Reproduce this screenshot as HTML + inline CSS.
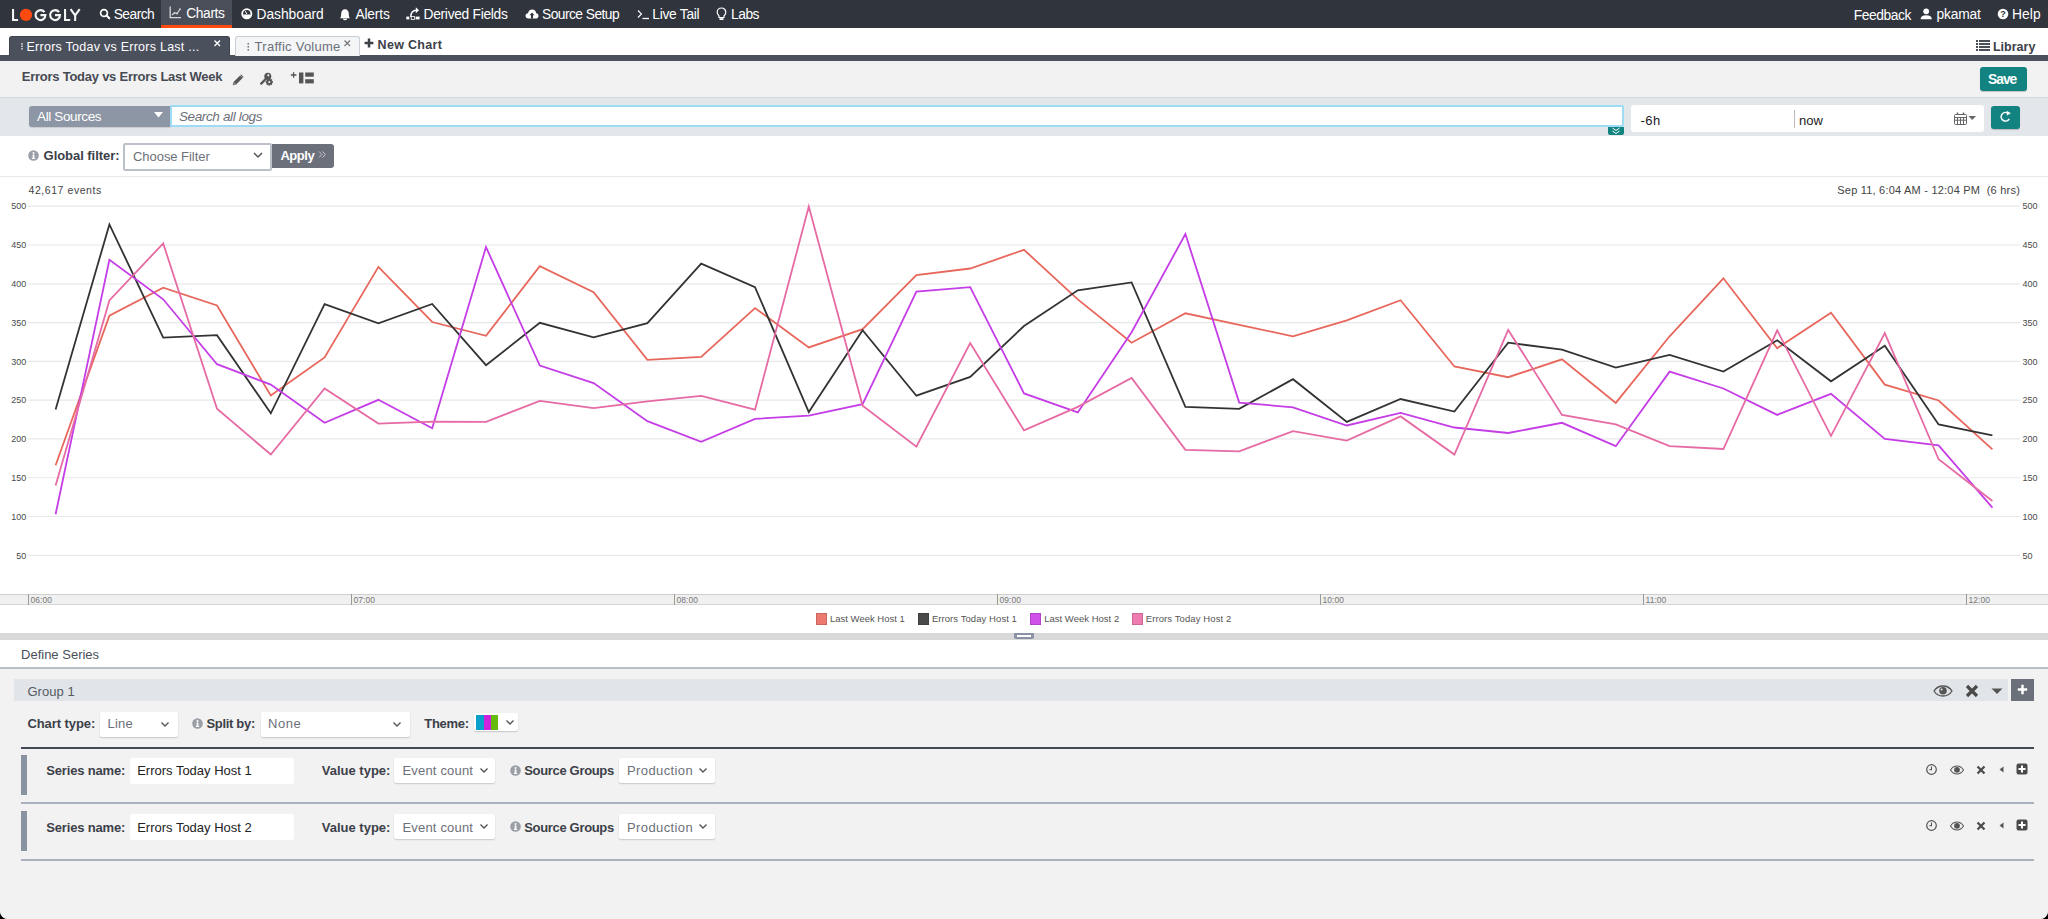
<!DOCTYPE html>
<html><head><meta charset="utf-8"><title>Loggly Charts</title>
<style>
html,body{margin:0;padding:0;}
body{width:2048px;height:919px;overflow:hidden;position:relative;background:#000;font-family:'Liberation Sans', sans-serif;}
#wrap{position:absolute;left:0;top:0;width:2048px;height:919px;overflow:hidden;background:#f2f2f2;border-radius:0 0 8px 8px;}
</style></head><body><div id="wrap">
<div style="position:absolute;left:0px;top:0px;width:2048.00px;height:28.00px;background:#30343d"></div><div style="position:absolute;left:161px;top:0px;width:71.00px;height:28.00px;background:#4a4e59"></div><div style="position:absolute;left:161px;top:25px;width:71.00px;height:3.00px;background:#ff4a0f"></div><svg style="position:absolute;left:0px;top:0px;" width="90" height="28" viewBox="0 0 90 28"><g fill="none" stroke="#f4f4f4" stroke-width="2.1"><path d="M13.05 8.9V20H18.1"/><path d="M44.5 12.2A4.95 4.95 0 1 0 45.45 15.1H40.4"/><path d="M59.1 12.2A4.95 4.95 0 1 0 60.05 15.1H55"/><path d="M65.05 8.9V20H70.2"/><path d="M70.6 9.1L75.15 15.4L79.7 9.1M75.15 15.2V21"/></g><circle cx="26" cy="14.9" r="6.1" fill="#ff4a0f"/></svg><span style="position:absolute;left:113.70px;top:8px;font-size:13.8px;line-height:1;font-weight:normal;color:#ffffff;white-space:pre;letter-spacing:-0.528px;">Search</span><span style="position:absolute;left:186.30px;top:7px;font-size:13.8px;line-height:1;font-weight:normal;color:#ffffff;white-space:pre;letter-spacing:-0.408px;">Charts</span><span style="position:absolute;left:256.50px;top:8px;font-size:13.8px;line-height:1;font-weight:normal;color:#ffffff;white-space:pre;letter-spacing:-0.028px;">Dashboard</span><span style="position:absolute;left:355.40px;top:8px;font-size:13.8px;line-height:1;font-weight:normal;color:#ffffff;white-space:pre;letter-spacing:-0.154px;">Alerts</span><span style="position:absolute;left:423.50px;top:8px;font-size:13.8px;line-height:1;font-weight:normal;color:#ffffff;white-space:pre;letter-spacing:-0.291px;">Derived Fields</span><span style="position:absolute;left:542.00px;top:8px;font-size:13.8px;line-height:1;font-weight:normal;color:#ffffff;white-space:pre;letter-spacing:-0.539px;">Source Setup</span><span style="position:absolute;left:652.30px;top:8px;font-size:13.8px;line-height:1;font-weight:normal;color:#ffffff;white-space:pre;letter-spacing:-0.285px;">Live Tail</span><span style="position:absolute;left:731.00px;top:8px;font-size:13.8px;line-height:1;font-weight:normal;color:#ffffff;white-space:pre;letter-spacing:-0.473px;">Labs</span><span style="position:absolute;left:1853.70px;top:9px;font-size:13.8px;line-height:1;font-weight:normal;color:#ffffff;white-space:pre;letter-spacing:-0.399px;">Feedback</span><span style="position:absolute;left:1936.50px;top:8px;font-size:13.8px;line-height:1;font-weight:normal;color:#ffffff;white-space:pre;letter-spacing:-0.182px;">pkamat</span><span style="position:absolute;left:2012.00px;top:8px;font-size:13.8px;line-height:1;font-weight:normal;color:#ffffff;white-space:pre;letter-spacing:0.099px;">Help</span><svg style="position:absolute;left:99px;top:8px;" width="12" height="12" viewBox="0 0 12 12"><circle cx="5" cy="5" r="3.4" fill="none" stroke="#fff" stroke-width="1.7"/><line x1="7.6" y1="7.6" x2="10.3" y2="10.3" stroke="#fff" stroke-width="2.1" stroke-linecap="round"/></svg><svg style="position:absolute;left:169px;top:6px;" width="13" height="13" viewBox="0 0 13 13"><path d="M1.2 0.5V11.6H12" fill="none" stroke="#d8d8d8" stroke-width="1.3"/><path d="M3 9L5.5 6.8L8 7.5L11 3.2" fill="none" stroke="#d8d8d8" stroke-width="1.1"/><circle cx="5.5" cy="6.8" r="0.9" fill="#d8d8d8"/><circle cx="8" cy="7.5" r="0.9" fill="#d8d8d8"/><circle cx="11" cy="3.2" r="0.9" fill="#d8d8d8"/></svg><svg style="position:absolute;left:241px;top:8px;" width="12" height="12" viewBox="0 0 12 12"><circle cx="5.8" cy="5.8" r="5.5" fill="#fff"/><circle cx="5.8" cy="5.8" r="3.7" fill="#30343d"/><path d="M2.1 6.6A3.7 3.7 0 0 0 9.5 6.6Z" fill="#fff"/><line x1="5.8" y1="6" x2="4.3" y2="3.2" stroke="#fff" stroke-width="1"/></svg><svg style="position:absolute;left:339px;top:8px;" width="12" height="13" viewBox="0 0 12 13"><path d="M1 10.2C2.2 9.2 2.2 7.2 2.2 5.6C2.2 3.1 3.8 1.2 6 1.2C8.2 1.2 9.8 3.1 9.8 5.6C9.8 7.2 9.8 9.2 11 10.2Z" fill="#fff"/><path d="M4.5 10.6A1.6 1.6 0 0 0 7.5 10.6" fill="none" stroke="#fff" stroke-width="1.4"/></svg><svg style="position:absolute;left:406px;top:6px;" width="14" height="14" viewBox="0 0 14 14"><rect x="0.3" y="10.6" width="3" height="2.8" fill="#fff"/><rect x="9.6" y="10.6" width="4" height="2.8" fill="#fff"/><path d="M4.8 11C4.8 6.5 6.8 4.2 10.5 4.2" fill="none" stroke="#fff" stroke-width="1.4"/><path d="M9.8 1.2L13 4.2L9.8 7.2Z" fill="#fff"/><rect x="5.2" y="10.4" width="3.2" height="3" fill="none" stroke="#fff" stroke-width="0.8"/></svg><svg style="position:absolute;left:525px;top:8px;" width="14" height="12" viewBox="0 0 14 12"><path d="M3.5 10.5C1.5 10.5 0.5 9.2 0.5 7.8C0.5 6.3 1.6 5.3 3 5.3C3.3 3 5 1.5 7.2 1.5C9.5 1.5 11 3.2 11.2 5.3C12.6 5.4 13.5 6.5 13.5 7.9C13.5 9.3 12.5 10.5 11 10.5Z" fill="#fff"/><path d="M7 4.5L4.5 7.2H6V10.5H8V7.2H9.5Z" fill="#30343d"/></svg><svg style="position:absolute;left:637px;top:9px;" width="13" height="11" viewBox="0 0 13 11"><path d="M1 1.5L4.5 5L1 8.5" fill="none" stroke="#fff" stroke-width="1.1"/><line x1="5.5" y1="9.5" x2="12" y2="9.5" stroke="#fff" stroke-width="1.3"/></svg><svg style="position:absolute;left:716px;top:7px;" width="11" height="14" viewBox="0 0 11 14"><path d="M5.5 1C3 1 1.2 2.9 1.2 5.2C1.2 7 2.3 8 3 9V10.5H8V9C8.7 8 9.8 7 9.8 5.2C9.8 2.9 8 1 5.5 1Z" fill="none" stroke="#fff" stroke-width="1.2"/><rect x="3.5" y="11.2" width="4" height="1.8" fill="#fff"/></svg><svg style="position:absolute;left:1920px;top:8px;" width="13" height="12" viewBox="0 0 13 12"><circle cx="6.2" cy="3.3" r="2.9" fill="#fff"/><path d="M0.6 11.3C0.6 8.6 2.4 7.2 6.2 7.2C10 7.2 11.8 8.6 11.8 11.3Z" fill="#fff"/></svg><svg style="position:absolute;left:1997px;top:8px;" width="12" height="12" viewBox="0 0 12 12"><circle cx="6" cy="6" r="5.3" fill="#fff"/><text x="6" y="9.3" font-size="9" font-weight="bold" text-anchor="middle" fill="#30343d" font-family="Liberation Sans">?</text></svg><div style="position:absolute;left:0px;top:28px;width:2048.00px;height:27.00px;background:#ffffff"></div><div style="position:absolute;left:0px;top:55px;width:2048.00px;height:6.00px;background:#4b505d"></div><div style="position:absolute;left:9px;top:36px;width:221.00px;height:20.00px;background:#4b505d;border:1px solid #3f434e;border-bottom:none;box-sizing:border-box;border-radius:3px 3px 0 0"></div><svg style="position:absolute;left:21px;top:43px;" width="3" height="8" viewBox="0 0 3 8"><rect x="0" y="0" width="2" height="1.6" fill="#bbb"/><rect x="0" y="2.5" width="2" height="1.6" fill="#bbb"/><rect x="0" y="5" width="2" height="1.6" fill="#bbb"/></svg><span style="position:absolute;left:26.50px;top:41px;font-size:12.5px;line-height:1;font-weight:normal;color:#ffffff;white-space:pre;letter-spacing:0.255px;">Errors Todav vs Errors Last ...</span><svg style="position:absolute;left:213px;top:39px;" width="9" height="9" viewBox="0 0 9 9"><path d="M1.5 1.5L7 7M7 1.5L1.5 7" stroke="#fff" stroke-width="1.4"/></svg><div style="position:absolute;left:235px;top:36px;width:125.00px;height:20.00px;background:#f4f5f7;border:1px solid #c9ced6;border-bottom:none;border-radius:3px 3px 0 0;box-sizing:border-box"></div><svg style="position:absolute;left:247px;top:43px;" width="3" height="10" viewBox="0 0 3 10"><rect x="0.5" y="0" width="1.5" height="1.6" fill="#777"/><rect x="0.5" y="3" width="1.5" height="1.6" fill="#777"/><rect x="0.5" y="6" width="1.5" height="1.6" fill="#777"/></svg><span style="position:absolute;left:254.60px;top:40px;font-size:13px;line-height:1;font-weight:normal;color:#6d7079;white-space:pre;letter-spacing:0.259px;">Traffic Volume</span><svg style="position:absolute;left:343px;top:39px;" width="9" height="9" viewBox="0 0 9 9"><path d="M1.5 1.5L7 7M7 1.5L1.5 7" stroke="#777" stroke-width="1.2"/></svg><svg style="position:absolute;left:363.5px;top:37.5px;" width="10" height="10" viewBox="0 0 10 10"><path d="M5 0.6V9.4M0.6 5H9.4" stroke="#3c4049" stroke-width="2.5"/></svg><span style="position:absolute;left:377.60px;top:39px;font-size:12.5px;line-height:1;font-weight:bold;color:#3c4049;white-space:pre;letter-spacing:0.306px;">New Chart</span><svg style="position:absolute;left:1976px;top:40px;" width="14" height="11" viewBox="0 0 14 11"><g fill="#4a4f58"><rect x="0" y="0" width="2" height="2"/><rect x="3" y="0" width="11" height="2"/><rect x="0" y="3" width="2" height="2"/><rect x="3" y="3" width="11" height="2"/><rect x="0" y="6" width="2" height="2"/><rect x="3" y="6" width="11" height="2"/><rect x="0" y="9" width="2" height="2"/><rect x="3" y="9" width="11" height="2"/></g></svg><span style="position:absolute;left:1992.90px;top:41px;font-size:12.5px;line-height:1;font-weight:bold;color:#3c4049;white-space:pre;letter-spacing:0.029px;">Library</span><div style="position:absolute;left:0px;top:61px;width:2048.00px;height:36.00px;background:#f2f2f2"></div><div style="position:absolute;left:0px;top:97px;width:2048.00px;height:1.00px;background:#d5d8dd"></div><span style="position:absolute;left:21.75px;top:70px;font-size:13px;line-height:1;font-weight:bold;color:#464a52;white-space:pre;letter-spacing:-0.245px;">Errors Today vs Errors Last Week</span><svg style="position:absolute;left:229px;top:72px;" width="16" height="16" viewBox="0 0 16 16"><g transform="translate(8.4,8.7) rotate(45)"><rect x="-1.8" y="-5.6" width="3.6" height="9.2" fill="#555"/><rect x="-1.8" y="-7" width="3.6" height="1" fill="#555"/><path d="M-1.8 3.8L0 6.6L1.8 3.8Z" fill="#555"/><path d="M-0.8 4.2L0 5.4L0.8 4.2Z" fill="#ddd"/></g></svg><svg style="position:absolute;left:258px;top:72px;" width="18" height="16" viewBox="0 0 18 16"><path d="M3.2 11.6L8.4 6.2" stroke="#555" stroke-width="2.3" stroke-linecap="round"/><circle cx="9.8" cy="4.2" r="3.5" fill="#555"/><circle cx="10.3" cy="3.3" r="1.1" fill="#f2f2f2"/><g transform="translate(11.3,10)" fill="#555"><circle r="2.7"/><rect x="-0.9" y="-3.6" width="1.8" height="1.6" transform="rotate(0)"/><rect x="-0.9" y="-3.6" width="1.8" height="1.6" transform="rotate(45)"/><rect x="-0.9" y="-3.6" width="1.8" height="1.6" transform="rotate(90)"/><rect x="-0.9" y="-3.6" width="1.8" height="1.6" transform="rotate(135)"/><rect x="-0.9" y="-3.6" width="1.8" height="1.6" transform="rotate(180)"/><rect x="-0.9" y="-3.6" width="1.8" height="1.6" transform="rotate(225)"/><rect x="-0.9" y="-3.6" width="1.8" height="1.6" transform="rotate(270)"/><rect x="-0.9" y="-3.6" width="1.8" height="1.6" transform="rotate(315)"/></g><circle cx="11.3" cy="10" r="1.1" fill="#f2f2f2"/></svg><svg style="position:absolute;left:290px;top:71px;" width="25" height="14" viewBox="0 0 25 14"><path d="M3.6 1.2V6.8M0.8 4H6.4" stroke="#555" stroke-width="1.3"/><rect x="9" y="1.5" width="4.4" height="10.9" fill="#555"/><rect x="15.2" y="1.5" width="8.6" height="4.2" fill="#555"/><rect x="15.2" y="8.2" width="8.6" height="4.2" fill="#555"/></svg><div style="position:absolute;left:1980px;top:67px;width:47.00px;height:24.00px;background:#128381;border-radius:3px;box-shadow:0 1px 1px rgba(0,0,0,.2)"></div><span style="position:absolute;left:1988.00px;top:73px;font-size:13.8px;line-height:1;font-weight:bold;color:#ffffff;white-space:pre;letter-spacing:-0.983px;">Save</span><div style="position:absolute;left:0px;top:98px;width:2048.00px;height:38.00px;background:#e3e6ea"></div><div style="position:absolute;left:29px;top:105.5px;width:142.00px;height:21.50px;background:#8d96a4;border-radius:3px 0 0 3px;box-shadow:0 1px 1px rgba(0,0,0,.12)"></div><span style="position:absolute;left:37.00px;top:110px;font-size:13.5px;line-height:1;font-weight:normal;color:#ffffff;white-space:pre;letter-spacing:-0.373px;">All Sources</span><svg style="position:absolute;left:154px;top:112px;" width="9" height="6" viewBox="0 0 9 6"><path d="M0 0H9L4.5 5.5Z" fill="#fff"/></svg><div style="position:absolute;left:170px;top:105px;width:1454.00px;height:21.50px;background:#fff;border:2px solid #9edcf6;border-radius:0 2px 2px 0;box-sizing:border-box"></div><span style="position:absolute;left:178.90px;top:110px;font-size:13.5px;line-height:1;font-weight:normal;color:#6d7079;white-space:pre;letter-spacing:-0.357px;font-style:italic">Search all logs</span><div style="position:absolute;left:1608px;top:127px;width:16.00px;height:8.00px;background:#128381;border-radius:0 0 2px 2px"></div><svg style="position:absolute;left:1610px;top:127px;" width="12" height="8" viewBox="0 0 12 8"><path d="M2.5 1L6 3.5L9.5 1M2.5 4L6 6.5L9.5 4" fill="none" stroke="#fff" stroke-width="1"/></svg><div style="position:absolute;left:1631px;top:105px;width:353.00px;height:27.00px;background:#fff;border-radius:3px"></div><span style="position:absolute;left:1640.60px;top:114px;font-size:13px;line-height:1;font-weight:normal;color:#222;white-space:pre;letter-spacing:0.420px;">-6h</span><div style="position:absolute;left:1794px;top:110px;width:1.00px;height:18.00px;background:#bbb"></div><span style="position:absolute;left:1799.00px;top:114px;font-size:13px;line-height:1;font-weight:normal;color:#222;white-space:pre;letter-spacing:-0.030px;">now</span><svg style="position:absolute;left:1954px;top:112px;" width="23" height="13" viewBox="0 0 23 13"><g fill="none" stroke="#666" stroke-width="1"><rect x="0.5" y="2.5" width="12" height="10" rx="1"/><path d="M0.5 5.5H12.5M0.5 8.2H12.5M3.5 5.5V12.5M6.5 5.5V12.5M9.5 5.5V12.5"/><path d="M3.5 0.5V3M9.5 0.5V3" stroke-width="1.4"/></g><path d="M14.5 4H22L18.2 8Z" fill="#666"/></svg><div style="position:absolute;left:1991px;top:106px;width:29.00px;height:23.00px;background:#128381;border-radius:3px;box-shadow:0 1px 1px rgba(0,0,0,.2)"></div><svg style="position:absolute;left:1998px;top:110px;" width="15" height="15" viewBox="0 0 15 15"><path d="M9.4 2.9A4.3 4.3 0 1 0 11.22 8.85" fill="none" stroke="#fff" stroke-width="1.6"/><path d="M8.8 0.7L12.9 3.3L8.9 5.6Z" fill="#fff"/></svg><div style="position:absolute;left:0px;top:136px;width:2048.00px;height:41.00px;background:#ffffff"></div><div style="position:absolute;left:0px;top:176px;width:2048.00px;height:1.00px;background:#e8e9eb"></div><svg style="position:absolute;left:28px;top:150px;" width="11" height="11" viewBox="0 0 11 11"><circle cx="5.5" cy="5.5" r="5.3" fill="#9a9ea6"/><rect x="4.6" y="4.5" width="1.8" height="4.5" fill="#fff"/><rect x="3.8" y="8" width="3.4" height="1" fill="#fff"/><circle cx="5.5" cy="2.9" r="1" fill="#fff"/></svg><span style="position:absolute;left:43.60px;top:149px;font-size:13px;line-height:1;font-weight:bold;color:#3c4049;white-space:pre;letter-spacing:-0.048px;">Global filter:</span><div style="position:absolute;left:123px;top:142.5px;width:149.00px;height:28.50px;background:#fff;border:2px solid #bcc1c9;border-radius:2px;box-sizing:border-box"></div><span style="position:absolute;left:133.00px;top:150px;font-size:13px;line-height:1;font-weight:normal;color:#6d7079;white-space:pre;letter-spacing:-0.048px;">Choose Filter</span><svg style="position:absolute;left:253px;top:152px;" width="10" height="7" viewBox="0 0 10 7"><path d="M1 1L5 5L9 1" fill="none" stroke="#555" stroke-width="1.5"/></svg><div style="position:absolute;left:272px;top:144px;width:62.00px;height:24.00px;background:#6c707b;border-radius:0 3px 3px 0"></div><span style="position:absolute;left:280.40px;top:149px;font-size:13px;line-height:1;font-weight:bold;color:#ffffff;white-space:pre;letter-spacing:-0.445px;">Apply</span><svg style="position:absolute;left:318px;top:150px;" width="9" height="9" viewBox="0 0 9 9"><path d="M1 1.5L4 4.5L1 7.5M4.5 1.5L7.5 4.5L4.5 7.5" fill="none" stroke="#ccc" stroke-width="1"/></svg><div style="position:absolute;left:0px;top:177px;width:2048.00px;height:456.00px;background:#ffffff"></div><span style="position:absolute;left:28.50px;top:185px;font-size:10.5px;line-height:1;font-weight:normal;color:#444;white-space:pre;letter-spacing:0.565px;">42,617 events</span><span style="position:absolute;left:1837.25px;top:185px;font-size:11px;line-height:1;font-weight:normal;color:#444;white-space:pre;letter-spacing:0.214px;">Sep 11, 6:04 AM - 12:04 PM  (6 hrs)</span><svg style="position:absolute;left:0px;top:176px;" width="2048" height="457" viewBox="0 0 2048 457"><line x1="28" y1="379.31" x2="2020" y2="379.31" stroke="#e8e8e8" stroke-width="1.2"/><line x1="28" y1="340.52" x2="2020" y2="340.52" stroke="#e8e8e8" stroke-width="1.2"/><line x1="28" y1="301.73" x2="2020" y2="301.73" stroke="#e8e8e8" stroke-width="1.2"/><line x1="28" y1="262.94" x2="2020" y2="262.94" stroke="#e8e8e8" stroke-width="1.2"/><line x1="28" y1="224.15" x2="2020" y2="224.15" stroke="#e8e8e8" stroke-width="1.2"/><line x1="28" y1="185.36" x2="2020" y2="185.36" stroke="#e8e8e8" stroke-width="1.2"/><line x1="28" y1="146.57" x2="2020" y2="146.57" stroke="#e8e8e8" stroke-width="1.2"/><line x1="28" y1="107.78" x2="2020" y2="107.78" stroke="#e8e8e8" stroke-width="1.2"/><line x1="28" y1="68.99" x2="2020" y2="68.99" stroke="#e8e8e8" stroke-width="1.2"/><line x1="28" y1="30.20" x2="2020" y2="30.20" stroke="#e8e8e8" stroke-width="1.2"/><rect x="0" y="418" width="2048" height="11" fill="#f0f0f0"/><line x1="0" y1="418.5" x2="2048" y2="418.5" stroke="#cfcfcf"/><line x1="0" y1="428.5" x2="2048" y2="428.5" stroke="#d6d6d6"/><line x1="28.5" y1="418" x2="28.5" y2="429" stroke="#999"/><line x1="351.5" y1="418" x2="351.5" y2="429" stroke="#999"/><line x1="674.5" y1="418" x2="674.5" y2="429" stroke="#999"/><line x1="997.5" y1="418" x2="997.5" y2="429" stroke="#999"/><line x1="1320.5" y1="418" x2="1320.5" y2="429" stroke="#999"/><line x1="1643.5" y1="418" x2="1643.5" y2="429" stroke="#999"/><line x1="1966.5" y1="418" x2="1966.5" y2="429" stroke="#999"/><polyline points="55.6,289.3 109.4,139.6 163.2,111.7 217.0,129.5 270.8,219.5 324.6,181.5 378.4,90.9 432.2,146.0 486.0,159.8 539.8,90.1 593.6,116.1 647.4,183.8 701.2,180.9 755.0,132.1 808.8,171.4 862.6,153.2 916.4,99.0 970.2,92.5 1024.0,73.8 1077.8,123.4 1131.6,166.7 1185.4,137.3 1239.2,148.9 1293.0,160.3 1346.8,144.4 1400.6,124.2 1454.4,190.5 1508.2,201.2 1562.0,183.3 1615.8,226.9 1669.6,160.3 1723.4,102.3 1777.2,172.2 1831.0,136.7 1884.8,208.6 1938.6,224.5 1992.4,273.3" fill="none" stroke="#e8675c" stroke-width="1.8" stroke-linejoin="miter"/><polyline points="55.6,233.5 109.4,48.4 163.2,161.6 217.0,159.2 270.8,237.3 324.6,128.2 378.4,147.3 432.2,128.0 486.0,189.2 539.8,146.8 593.6,161.3 647.4,147.2 701.2,87.7 755.0,111.1 808.8,236.1 862.6,154.3 916.4,219.7 970.2,200.9 1024.0,150.0 1077.8,114.3 1131.6,106.4 1185.4,230.9 1239.2,232.9 1293.0,203.2 1346.8,245.9 1400.6,223.0 1454.4,235.6 1508.2,166.7 1562.0,173.6 1615.8,191.6 1669.6,178.9 1723.4,195.6 1777.2,164.3 1831.0,205.3 1884.8,169.8 1938.6,248.4 1992.4,259.4" fill="none" stroke="#333333" stroke-width="1.8" stroke-linejoin="miter"/><polyline points="55.6,338.2 109.4,83.7 163.2,123.3 217.0,188.2 270.8,208.6 324.6,246.8 378.4,223.8 432.2,252.3 486.0,71.1 539.8,189.6 593.6,207.1 647.4,245.2 701.2,265.8 755.0,242.8 808.8,239.7 862.6,228.1 916.4,115.5 970.2,111.1 1024.0,217.4 1077.8,236.4 1131.6,156.3 1185.4,58.0 1239.2,226.6 1293.0,231.3 1346.8,249.5 1400.6,236.9 1454.4,251.5 1508.2,257.0 1562.0,246.8 1615.8,270.2 1669.6,195.6 1723.4,212.5 1777.2,238.9 1831.0,217.9 1884.8,262.9 1938.6,269.4 1992.4,331.7" fill="none" stroke="#c53de6" stroke-width="1.8" stroke-linejoin="miter"/><polyline points="55.6,309.5 109.4,124.4 163.2,67.4 217.0,232.7 270.8,278.5 324.6,212.5 378.4,247.6 432.2,245.6 486.0,245.9 539.8,224.9 593.6,232.1 647.4,225.3 701.2,219.8 755.0,233.7 808.8,30.6 862.6,229.7 916.4,270.7 970.2,167.1 1024.0,254.4 1077.8,230.9 1131.6,202.0 1185.4,273.8 1239.2,275.4 1293.0,255.2 1346.8,264.6 1400.6,240.4 1454.4,278.5 1508.2,153.9 1562.0,238.9 1615.8,248.4 1669.6,270.2 1723.4,273.0 1777.2,154.3 1831.0,259.8 1884.8,157.1 1938.6,283.3 1992.4,325.0" fill="none" stroke="#e66aa3" stroke-width="1.8" stroke-linejoin="miter"/></svg><span style="position:absolute;left:16.29px;top:552px;font-size:9px;line-height:1;font-weight:normal;color:#4a4a4a;white-space:pre;">50</span><span style="position:absolute;left:2022.40px;top:552px;font-size:9px;line-height:1;font-weight:normal;color:#4a4a4a;white-space:pre;">50</span><span style="position:absolute;left:11.29px;top:513px;font-size:9px;line-height:1;font-weight:normal;color:#4a4a4a;white-space:pre;">100</span><span style="position:absolute;left:2022.40px;top:513px;font-size:9px;line-height:1;font-weight:normal;color:#4a4a4a;white-space:pre;">100</span><span style="position:absolute;left:11.29px;top:474px;font-size:9px;line-height:1;font-weight:normal;color:#4a4a4a;white-space:pre;">150</span><span style="position:absolute;left:2022.40px;top:474px;font-size:9px;line-height:1;font-weight:normal;color:#4a4a4a;white-space:pre;">150</span><span style="position:absolute;left:11.29px;top:435px;font-size:9px;line-height:1;font-weight:normal;color:#4a4a4a;white-space:pre;">200</span><span style="position:absolute;left:2022.40px;top:435px;font-size:9px;line-height:1;font-weight:normal;color:#4a4a4a;white-space:pre;">200</span><span style="position:absolute;left:11.29px;top:396px;font-size:9px;line-height:1;font-weight:normal;color:#4a4a4a;white-space:pre;">250</span><span style="position:absolute;left:2022.40px;top:396px;font-size:9px;line-height:1;font-weight:normal;color:#4a4a4a;white-space:pre;">250</span><span style="position:absolute;left:11.29px;top:358px;font-size:9px;line-height:1;font-weight:normal;color:#4a4a4a;white-space:pre;">300</span><span style="position:absolute;left:2022.40px;top:358px;font-size:9px;line-height:1;font-weight:normal;color:#4a4a4a;white-space:pre;">300</span><span style="position:absolute;left:11.29px;top:319px;font-size:9px;line-height:1;font-weight:normal;color:#4a4a4a;white-space:pre;">350</span><span style="position:absolute;left:2022.40px;top:319px;font-size:9px;line-height:1;font-weight:normal;color:#4a4a4a;white-space:pre;">350</span><span style="position:absolute;left:11.29px;top:280px;font-size:9px;line-height:1;font-weight:normal;color:#4a4a4a;white-space:pre;">400</span><span style="position:absolute;left:2022.40px;top:280px;font-size:9px;line-height:1;font-weight:normal;color:#4a4a4a;white-space:pre;">400</span><span style="position:absolute;left:11.29px;top:241px;font-size:9px;line-height:1;font-weight:normal;color:#4a4a4a;white-space:pre;">450</span><span style="position:absolute;left:2022.40px;top:241px;font-size:9px;line-height:1;font-weight:normal;color:#4a4a4a;white-space:pre;">450</span><span style="position:absolute;left:11.29px;top:202px;font-size:9px;line-height:1;font-weight:normal;color:#4a4a4a;white-space:pre;">500</span><span style="position:absolute;left:2022.40px;top:202px;font-size:9px;line-height:1;font-weight:normal;color:#4a4a4a;white-space:pre;">500</span><span style="position:absolute;left:30.60px;top:596px;font-size:8.5px;line-height:1;font-weight:normal;color:#777;white-space:pre;">06:00</span><span style="position:absolute;left:353.60px;top:596px;font-size:8.5px;line-height:1;font-weight:normal;color:#777;white-space:pre;">07:00</span><span style="position:absolute;left:676.60px;top:596px;font-size:8.5px;line-height:1;font-weight:normal;color:#777;white-space:pre;">08:00</span><span style="position:absolute;left:999.60px;top:596px;font-size:8.5px;line-height:1;font-weight:normal;color:#777;white-space:pre;">09:00</span><span style="position:absolute;left:1322.60px;top:596px;font-size:8.5px;line-height:1;font-weight:normal;color:#777;white-space:pre;">10:00</span><span style="position:absolute;left:1645.60px;top:596px;font-size:8.5px;line-height:1;font-weight:normal;color:#777;white-space:pre;">11:00</span><span style="position:absolute;left:1968.60px;top:596px;font-size:8.5px;line-height:1;font-weight:normal;color:#777;white-space:pre;">12:00</span><div style="position:absolute;left:816px;top:613px;width:11.00px;height:12.00px;background:#ec7a70;border:1px solid rgba(0,0,0,.15);box-sizing:border-box"></div><span style="position:absolute;left:830.00px;top:614px;font-size:9.5px;line-height:1;font-weight:normal;color:#555;white-space:pre;letter-spacing:-0.001px;">Last Week Host 1</span><div style="position:absolute;left:917.5px;top:613px;width:11.00px;height:12.00px;background:#4a4a4a;border:1px solid rgba(0,0,0,.15);box-sizing:border-box"></div><span style="position:absolute;left:931.90px;top:614px;font-size:9.5px;line-height:1;font-weight:normal;color:#555;white-space:pre;letter-spacing:0.069px;">Errors Today Host 1</span><div style="position:absolute;left:1030px;top:613px;width:11.00px;height:12.00px;background:#d050ea;border:1px solid rgba(0,0,0,.15);box-sizing:border-box"></div><span style="position:absolute;left:1044.20px;top:614px;font-size:9.5px;line-height:1;font-weight:normal;color:#555;white-space:pre;letter-spacing:0.012px;">Last Week Host 2</span><div style="position:absolute;left:1131.6px;top:613px;width:11.00px;height:12.00px;background:#ee7cb0;border:1px solid rgba(0,0,0,.15);box-sizing:border-box"></div><span style="position:absolute;left:1145.70px;top:614px;font-size:9.5px;line-height:1;font-weight:normal;color:#555;white-space:pre;letter-spacing:0.102px;">Errors Today Host 2</span><div style="position:absolute;left:0px;top:633px;width:2048.00px;height:7.00px;background:#d8d8d8"></div><div style="position:absolute;left:1014px;top:633px;width:20.00px;height:6.00px;background:#8a93a3;border-radius:0 0 2px 2px"></div><div style="position:absolute;left:1017px;top:635px;width:14.00px;height:2.00px;background:#fff"></div><div style="position:absolute;left:0px;top:640px;width:2048.00px;height:27.00px;background:#ffffff"></div><span style="position:absolute;left:21.00px;top:648px;font-size:13px;line-height:1;font-weight:normal;color:#4a4f58;white-space:pre;letter-spacing:0.005px;">Define Series</span><div style="position:absolute;left:0px;top:667px;width:2048.00px;height:2.00px;background:#b8bfc9"></div><div style="position:absolute;left:0px;top:669px;width:2048.00px;height:250.00px;background:#f2f2f2"></div><div style="position:absolute;left:14px;top:679px;width:1994.00px;height:22.00px;background:#e1e4e8"></div><span style="position:absolute;left:27.40px;top:685px;font-size:13px;line-height:1;font-weight:normal;color:#555a63;white-space:pre;letter-spacing:0.043px;">Group 1</span><div style="position:absolute;left:2011px;top:679px;width:23.00px;height:22.00px;background:#6c707b"></div><svg style="position:absolute;left:2016px;top:683.3px;" width="13" height="13" viewBox="0 0 13 13"><path d="M6.5 1.8V11.2M1.8 6.5H11.2" stroke="#fff" stroke-width="2.4"/></svg><svg style="position:absolute;left:1933px;top:685px;" width="20" height="12" viewBox="0 0 20 12"><path d="M1 6C3.5 2 6.5 1 10 1C13.5 1 16.5 2 19 6C16.5 10 13.5 11 10 11C6.5 11 3.5 10 1 6Z" fill="none" stroke="#555" stroke-width="1.3"/><circle cx="10" cy="5.8" r="3.8" fill="#555"/><circle cx="8.6" cy="4.6" r="1" fill="#e1e4e8"/></svg><svg style="position:absolute;left:1965px;top:684px;" width="14" height="14" viewBox="0 0 14 14"><path d="M2 2L12 12M12 2L2 12" stroke="#4a4a4a" stroke-width="3.2"/></svg><svg style="position:absolute;left:1991px;top:688px;" width="12" height="7" viewBox="0 0 12 7"><path d="M0.5 0.5H11.5L6 6Z" fill="#555"/></svg><span style="position:absolute;left:27.40px;top:717px;font-size:13px;line-height:1;font-weight:bold;color:#3c4049;white-space:pre;letter-spacing:-0.069px;">Chart type:</span><div style="position:absolute;left:100px;top:711.5px;width:78.00px;height:25.50px;background:#fff;border-radius:2px;box-shadow:0 1px 1.5px rgba(0,0,0,.18)"></div><span style="position:absolute;left:107.40px;top:717px;font-size:13px;line-height:1;font-weight:normal;color:#6d7079;white-space:pre;letter-spacing:0.284px;">Line</span><svg style="position:absolute;left:160px;top:720.75px;" width="10" height="7" viewBox="0 0 10 7"><path d="M1.5 1.5L5 5L8.5 1.5" fill="none" stroke="#555" stroke-width="1.4"/></svg><svg style="position:absolute;left:192px;top:718px;" width="11" height="11" viewBox="0 0 11 11"><circle cx="5.5" cy="5.5" r="5.3" fill="#9a9ea6"/><rect x="4.6" y="4.5" width="1.8" height="4.5" fill="#fff"/><rect x="3.8" y="8" width="3.4" height="1" fill="#fff"/><circle cx="5.5" cy="2.9" r="1" fill="#fff"/></svg><span style="position:absolute;left:206.50px;top:717px;font-size:13px;line-height:1;font-weight:bold;color:#3c4049;white-space:pre;letter-spacing:-0.318px;">Split by:</span><div style="position:absolute;left:260.5px;top:711.5px;width:149.00px;height:25.50px;background:#fff;border-radius:2px;box-shadow:0 1px 1.5px rgba(0,0,0,.18)"></div><span style="position:absolute;left:268.00px;top:717px;font-size:13px;line-height:1;font-weight:normal;color:#6d7079;white-space:pre;letter-spacing:0.551px;">None</span><svg style="position:absolute;left:392px;top:720.75px;" width="10" height="7" viewBox="0 0 10 7"><path d="M1.5 1.5L5 5L8.5 1.5" fill="none" stroke="#555" stroke-width="1.4"/></svg><span style="position:absolute;left:424.30px;top:717px;font-size:13px;line-height:1;font-weight:bold;color:#3c4049;white-space:pre;letter-spacing:-0.300px;">Theme:</span><div style="position:absolute;left:474px;top:713px;width:44.00px;height:18.00px;background:#fff;border-radius:2px;box-shadow:0 1px 1.5px rgba(0,0,0,.18)"></div><div style="position:absolute;left:476.3px;top:715.4px;width:7.30px;height:14.60px;background:#0aa0cc"></div><div style="position:absolute;left:483.6px;top:715.4px;width:7.40px;height:14.60px;background:#cc22dd"></div><div style="position:absolute;left:491px;top:715.4px;width:7.00px;height:14.60px;background:#66bb11"></div><svg style="position:absolute;left:505px;top:719px;" width="10" height="7" viewBox="0 0 10 7"><path d="M1.5 1.5L5 5L8.5 1.5" fill="none" stroke="#555" stroke-width="1.4"/></svg><div style="position:absolute;left:21px;top:747px;width:2013.00px;height:1.50px;background:#454a56"></div><div style="position:absolute;left:21px;top:755px;width:6.00px;height:40.00px;background:#8a93a3"></div><span style="position:absolute;left:46.30px;top:764px;font-size:13px;line-height:1;font-weight:bold;color:#3c4049;white-space:pre;letter-spacing:-0.173px;">Series name:</span><div style="position:absolute;left:129.7px;top:758px;width:164.50px;height:25.70px;background:#fff;border-radius:3px"></div><span style="position:absolute;left:137.20px;top:764px;font-size:13px;line-height:1;font-weight:normal;color:#222;white-space:pre;letter-spacing:-0.008px;">Errors Today Host 1</span><span style="position:absolute;left:321.70px;top:764px;font-size:13px;line-height:1;font-weight:bold;color:#3c4049;white-space:pre;letter-spacing:0.009px;">Value type:</span><div style="position:absolute;left:394px;top:758.2px;width:101.00px;height:24.40px;background:#fff;border-radius:2px;box-shadow:0 1px 1.5px rgba(0,0,0,.18)"></div><span style="position:absolute;left:402.50px;top:764px;font-size:13px;line-height:1;font-weight:normal;color:#6d7079;white-space:pre;letter-spacing:0.176px;">Event count</span><svg style="position:absolute;left:478.5px;top:766.9000000000001px;" width="10" height="7" viewBox="0 0 10 7"><path d="M1.5 1.5L5 5L8.5 1.5" fill="none" stroke="#555" stroke-width="1.4"/></svg><svg style="position:absolute;left:509.5px;top:765px;" width="11" height="11" viewBox="0 0 11 11"><circle cx="5.5" cy="5.5" r="5.3" fill="#9a9ea6"/><rect x="4.6" y="4.5" width="1.8" height="4.5" fill="#fff"/><rect x="3.8" y="8" width="3.4" height="1" fill="#fff"/><circle cx="5.5" cy="2.9" r="1" fill="#fff"/></svg><span style="position:absolute;left:524.20px;top:764px;font-size:13px;line-height:1;font-weight:bold;color:#3c4049;white-space:pre;letter-spacing:-0.323px;">Source Groups</span><div style="position:absolute;left:618.6px;top:758.2px;width:96.60px;height:24.40px;background:#fff;border-radius:2px;box-shadow:0 1px 1.5px rgba(0,0,0,.18)"></div><span style="position:absolute;left:627.00px;top:764px;font-size:13px;line-height:1;font-weight:normal;color:#6d7079;white-space:pre;letter-spacing:0.398px;">Production</span><svg style="position:absolute;left:697.5px;top:766.9000000000001px;" width="10" height="7" viewBox="0 0 10 7"><path d="M1.5 1.5L5 5L8.5 1.5" fill="none" stroke="#555" stroke-width="1.4"/></svg><svg style="position:absolute;left:1926px;top:763.5px;" width="12" height="12" viewBox="0 0 12 12"><circle cx="5.5" cy="5.5" r="4.8" fill="none" stroke="#555" stroke-width="1.2"/><path d="M5.5 2.5V5.8H3.2" fill="none" stroke="#555" stroke-width="1.1"/></svg><svg style="position:absolute;left:1950px;top:764.5px;" width="14" height="10" viewBox="0 0 14 10"><path d="M0.5 5C2.5 1.8 4.5 1 7 1C9.5 1 11.5 1.8 13.5 5C11.5 8.2 9.5 9 7 9C4.5 9 2.5 8.2 0.5 5Z" fill="none" stroke="#555" stroke-width="1.1"/><circle cx="7" cy="4.8" r="2.9" fill="#555"/></svg><svg style="position:absolute;left:1976px;top:764.5px;" width="10" height="10" viewBox="0 0 10 10"><path d="M1.5 1.5L8.5 8.5M8.5 1.5L1.5 8.5" stroke="#4a4a4a" stroke-width="2.2"/></svg><svg style="position:absolute;left:1998.5px;top:766px;" width="5" height="7" viewBox="0 0 5 7"><path d="M4.5 0.5V6.5L0.5 3.5Z" fill="#555"/></svg><svg style="position:absolute;left:2016px;top:763px;" width="12" height="12" viewBox="0 0 12 12"><rect x="0.5" y="0.5" width="11" height="11" rx="2" fill="#4a4a4a"/><path d="M6 2.5V9.5M2.5 6H9.5" stroke="#fff" stroke-width="2"/></svg><div style="position:absolute;left:21px;top:802px;width:2013.00px;height:2.00px;background:#a9b1bc"></div><div style="position:absolute;left:21px;top:811px;width:6.00px;height:40.00px;background:#8a93a3"></div><span style="position:absolute;left:46.30px;top:821px;font-size:13px;line-height:1;font-weight:bold;color:#3c4049;white-space:pre;letter-spacing:-0.173px;">Series name:</span><div style="position:absolute;left:129.7px;top:814px;width:164.50px;height:25.70px;background:#fff;border-radius:3px"></div><span style="position:absolute;left:137.20px;top:821px;font-size:13px;line-height:1;font-weight:normal;color:#222;white-space:pre;letter-spacing:-0.008px;">Errors Today Host 2</span><span style="position:absolute;left:321.70px;top:821px;font-size:13px;line-height:1;font-weight:bold;color:#3c4049;white-space:pre;letter-spacing:0.009px;">Value type:</span><div style="position:absolute;left:394px;top:814.2px;width:101.00px;height:24.40px;background:#fff;border-radius:2px;box-shadow:0 1px 1.5px rgba(0,0,0,.18)"></div><span style="position:absolute;left:402.50px;top:821px;font-size:13px;line-height:1;font-weight:normal;color:#6d7079;white-space:pre;letter-spacing:0.176px;">Event count</span><svg style="position:absolute;left:478.5px;top:822.9000000000001px;" width="10" height="7" viewBox="0 0 10 7"><path d="M1.5 1.5L5 5L8.5 1.5" fill="none" stroke="#555" stroke-width="1.4"/></svg><svg style="position:absolute;left:509.5px;top:821px;" width="11" height="11" viewBox="0 0 11 11"><circle cx="5.5" cy="5.5" r="5.3" fill="#9a9ea6"/><rect x="4.6" y="4.5" width="1.8" height="4.5" fill="#fff"/><rect x="3.8" y="8" width="3.4" height="1" fill="#fff"/><circle cx="5.5" cy="2.9" r="1" fill="#fff"/></svg><span style="position:absolute;left:524.20px;top:821px;font-size:13px;line-height:1;font-weight:bold;color:#3c4049;white-space:pre;letter-spacing:-0.323px;">Source Groups</span><div style="position:absolute;left:618.6px;top:814.2px;width:96.60px;height:24.40px;background:#fff;border-radius:2px;box-shadow:0 1px 1.5px rgba(0,0,0,.18)"></div><span style="position:absolute;left:627.00px;top:821px;font-size:13px;line-height:1;font-weight:normal;color:#6d7079;white-space:pre;letter-spacing:0.398px;">Production</span><svg style="position:absolute;left:697.5px;top:822.9000000000001px;" width="10" height="7" viewBox="0 0 10 7"><path d="M1.5 1.5L5 5L8.5 1.5" fill="none" stroke="#555" stroke-width="1.4"/></svg><svg style="position:absolute;left:1926px;top:819.5px;" width="12" height="12" viewBox="0 0 12 12"><circle cx="5.5" cy="5.5" r="4.8" fill="none" stroke="#555" stroke-width="1.2"/><path d="M5.5 2.5V5.8H3.2" fill="none" stroke="#555" stroke-width="1.1"/></svg><svg style="position:absolute;left:1950px;top:820.5px;" width="14" height="10" viewBox="0 0 14 10"><path d="M0.5 5C2.5 1.8 4.5 1 7 1C9.5 1 11.5 1.8 13.5 5C11.5 8.2 9.5 9 7 9C4.5 9 2.5 8.2 0.5 5Z" fill="none" stroke="#555" stroke-width="1.1"/><circle cx="7" cy="4.8" r="2.9" fill="#555"/></svg><svg style="position:absolute;left:1976px;top:820.5px;" width="10" height="10" viewBox="0 0 10 10"><path d="M1.5 1.5L8.5 8.5M8.5 1.5L1.5 8.5" stroke="#4a4a4a" stroke-width="2.2"/></svg><svg style="position:absolute;left:1998.5px;top:822px;" width="5" height="7" viewBox="0 0 5 7"><path d="M4.5 0.5V6.5L0.5 3.5Z" fill="#555"/></svg><svg style="position:absolute;left:2016px;top:819px;" width="12" height="12" viewBox="0 0 12 12"><rect x="0.5" y="0.5" width="11" height="11" rx="2" fill="#4a4a4a"/><path d="M6 2.5V9.5M2.5 6H9.5" stroke="#fff" stroke-width="2"/></svg><div style="position:absolute;left:21px;top:859px;width:2013.00px;height:2.00px;background:#a9b1bc"></div>
</div></body></html>
